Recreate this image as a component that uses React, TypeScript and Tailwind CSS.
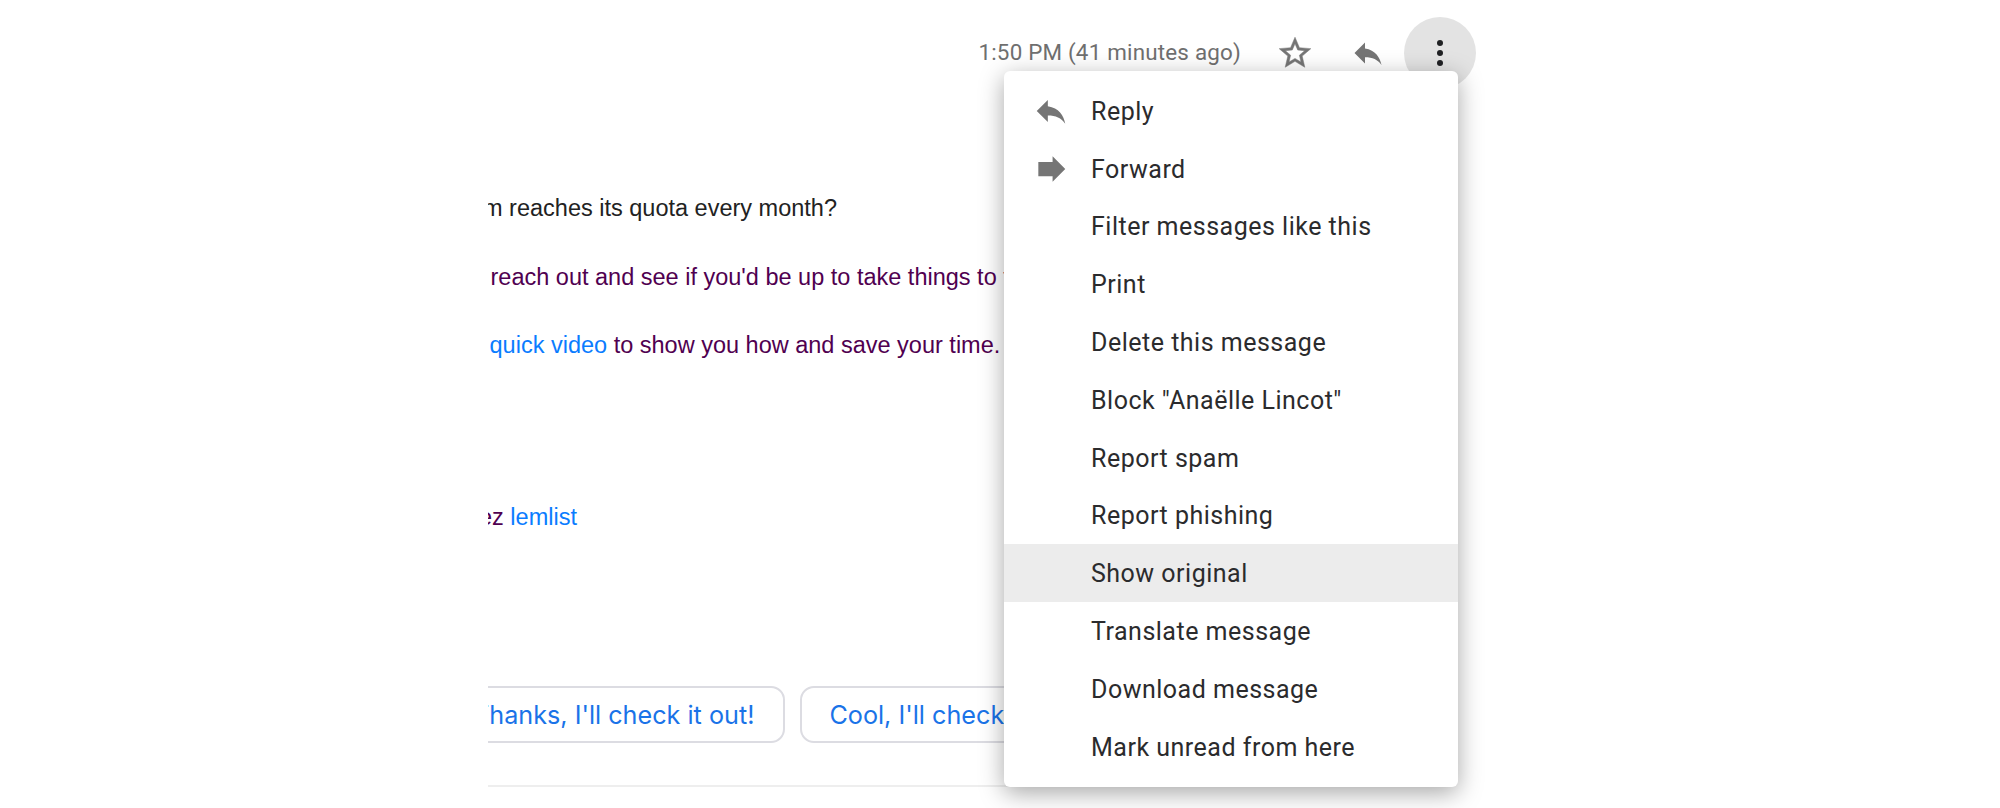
const menuItems = [
  'Reply',
  'Forward',
  'Filter messages like this',
  'Print',
  'Delete this message',
  'Block "Anaëlle Lincot"',
  'Report spam',
  'Report phishing',
  'Show original',
  'Translate message',
  'Download message',
  'Mark unread from here',
];

const REPLY_PATH = 'M10 9V5l-7 7 7 7v-4.1c5 0 8.5 1.6 11 5.1-1-5-4-10-11-11z';

function ReplyIcon({ className }: { className: string }) {
  return (
    <svg className={className} viewBox="0 0 24 24" fill="currentColor" aria-hidden="true">
      <path d={REPLY_PATH} />
    </svg>
  );
}

function ForwardIcon() {
  return (
    <svg className="h-[38px] w-[38px] text-[#757575]" viewBox="0 0 24 24" fill="currentColor" aria-hidden="true">
      <path d="M4 7.5h9V4l8 8-8 8v-3.5H4z" />
    </svg>
  );
}

function MenuRow({ label }: { label: string }) {
  return (
    <div className={`flex h-[57.8px] items-center ${label === 'Show original' ? 'bg-[#ececec]' : ''}`}>
      <div className="flex w-[87px] shrink-0 justify-end pr-[21px]">
        {label === 'Reply' && <ReplyIcon className="h-[38px] w-[38px] text-[#757575]" />}
        {label === 'Forward' && <ForwardIcon />}
      </div>
      <span className="pt-[1.5px] text-[25px] tracking-[0.5px] text-[#2b2b2d]">{label}</span>
    </div>
  );
}

export default function App() {
  return (
    <div className="relative flex h-[808px] w-[2000px] flex-col overflow-hidden bg-white font-['Roboto',sans-serif]">
      {/* Message header */}
      <header className="flex items-center justify-end pt-[17px] pr-[524px]">
        <span className="text-[22.4px] tracking-[0.2px] text-[#6f6f6f]">1:50 PM (41 minutes ago)</span>
        <svg className="ml-[35px] h-[38px] w-[38px] text-[#757575]" viewBox="0 0 24 24" fill="currentColor" stroke="currentColor" strokeWidth="0.3" aria-hidden="true">
          <path d="M22 9.24l-7.19-.62L12 2 9.19 8.62 2 9.24l5.46 4.73L5.82 21 12 17.27 18.18 21l-1.63-7.03L22 9.24zM12 15.4l-3.76 2.27 1-4.28-3.32-2.88 4.38-.38L12 6.1l1.71 4.04 4.38.38-3.32 2.88 1 4.28L12 15.4z" />
        </svg>
        <ReplyIcon className="ml-[36px] h-[36px] w-[36px] text-[#757575]" />
        <div className="ml-[18px] flex h-[72px] w-[72px] items-center justify-center rounded-full bg-[#e3e3e3]">
          <svg className="h-[36px] w-[36px] text-[#202124]" viewBox="0 0 36 36" fill="currentColor" aria-hidden="true">
            <circle cx="18" cy="8" r="3" />
            <circle cx="18" cy="18" r="3" />
            <circle cx="18" cy="28" r="3" />
          </svg>
        </div>
      </header>

      {/* Message body, cropped on the left */}
      <main className="ml-[488px] w-[700px] overflow-hidden whitespace-nowrap font-['Liberation_Sans',sans-serif] text-[23.5px] leading-[34px]">
        <p className="mt-[102px] -ml-[5px] text-[#222222]">m reaches its quota every month?</p>
        <p className="mt-[35px] -ml-[4px] text-[#500050]">&nbsp;reach out and see if you'd be up to take things to the next</p>
        <p className="mt-[34px] -ml-[5px] text-[#500050]">
          <span className="text-[#0a7cff]">&nbsp;quick video</span> to show you how and save your time.
        </p>
        <p className="mt-[138px] -ml-[9px] text-[#500050]">
          ez <span className="text-[#0a7cff]">lemlist</span>
        </p>

        <div className="mt-[152px] flex gap-[15px] font-['Inter',sans-serif] text-[25.2px] text-[#1a73e8]">
          <div className="-ml-[22px] flex h-[57px] shrink-0 items-center rounded-[14px] border-2 border-[#dcdce2] pr-[29px] pl-[5px]">
            Thanks, I'll check it out!
          </div>
          <div className="flex h-[57px] shrink-0 items-center rounded-[14px] border-2 border-[#dcdce2] px-[27px]">
            Cool, I'll check it out!
          </div>
        </div>
        <div className="mt-[42px] h-[2px] bg-[#eeeeee]" />
      </main>

      {/* Overflow menu */}
      <div className="absolute top-[71px] left-[1004px] w-[454px] rounded-[6px] bg-white pt-[11px] pb-[11px] shadow-[0_6px_24px_rgba(0,0,0,0.35)]">
        {menuItems.map((label) => (
          <MenuRow key={label} label={label} />
        ))}
      </div>
    </div>
  );
}
